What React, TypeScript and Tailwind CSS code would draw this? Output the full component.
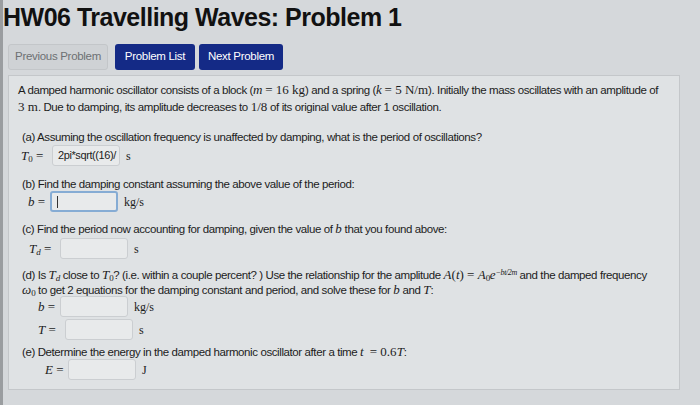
import React from "react";

const serif = "font-['Liberation_Serif',serif]";

const M = ({ children }: { children: React.ReactNode }) => (
  <span className={`${serif} italic text-[13px] leading-none tracking-normal`}>{children}</span>
);

const R = ({ children }: { children: React.ReactNode }) => (
  <span className={`${serif} text-[13px] leading-none tracking-normal`}>{children}</span>
);

const Sub = ({ children, italic }: { children: React.ReactNode; italic?: boolean }) => (
  <sub className={`${serif} text-[9px] ${italic ? "italic" : ""}`}>{children}</sub>
);

function AnswerRow({
  label,
  unit,
  value,
  ml,
  lw,
  mt,
  active,
}: {
  label: React.ReactNode;
  unit: string;
  value?: string;
  ml: string;
  lw: string;
  mt: string;
  active?: boolean;
}) {
  return (
    <div className={`flex items-center h-[21px] ${ml} ${mt}`}>
      <span className={`${serif} text-[13px] ${lw} whitespace-nowrap tracking-normal`}>{label}</span>
      <div
        className={`h-[21px] w-[68px] rounded-[3px] bg-[#e8eaeb] flex items-center px-[5px] text-[11px] overflow-hidden whitespace-nowrap ${
          active ? "border-2 border-[#86acd4]" : "border border-[#cbced1]"
        }`}
      >
        {value}
        {active && <span className="w-px h-[12px] bg-[#333]" />}
      </div>
      <span className={`${serif} text-[12px] ml-[6px] tracking-normal`}>{unit}</span>
    </div>
  );
}

export default function App() {
  return (
    <div className="w-[700px] h-[405px] overflow-hidden bg-[#d5d8db] font-['Liberation_Sans',Arial,sans-serif] text-[#1c1c1c] border-l-[3px] border-[#9a9da0]">
      <h1 className="pt-[2px] text-[25px] font-bold text-[#111] tracking-[-0.5px] leading-[30px]">
        HW06 Travelling Waves: Problem 1
      </h1>

      <div className="flex gap-[4px] ml-[5px] mt-[12px] text-[11.5px] tracking-[-0.3px]">
        <button className="h-[26px] w-[100px] rounded-[3px] bg-[#cfd2d5] border border-[#c3c6c9] text-[#6d7073]">
          Previous Problem
        </button>
        <button className="h-[26px] w-[80px] ml-[3px] rounded-[3px] bg-[#142a86] text-white">
          Problem List
        </button>
        <button className="h-[26px] w-[84px] rounded-[3px] bg-[#142a86] text-white">
          Next Problem
        </button>
      </div>

      <div className="ml-[5px] mt-[5px] w-[672px] h-[315px] bg-[#dfe2e4] border border-[#c4c7ca] pl-[9px] pr-[4px] pt-[6px] text-[11.5px] tracking-[-0.4px]">
        <p className="leading-[17px] whitespace-nowrap">
          A damped harmonic oscillator consists of a block (<M>m</M> <R>= 16 kg</R>) and a spring (<M>k</M>{" "}
          <R>= 5 N/m</R>). Initially the mass oscillates with an amplitude of
          <br />
          <R>3 m</R>. Due to damping, its amplitude decreases to <R>1/8</R> of its original value after 1 oscillation.
        </p>

        <div className="mt-[14px] pl-[4px] leading-[15px]">
          <p>(a) Assuming the oscillation frequency is unaffected by damping, what is the period of oscillations?</p>
        </div>
        <AnswerRow
          ml="ml-[3px]"
          lw="w-[31px]"
          mt="mt-0"
          label={
            <>
              <i>T</i>
              <Sub>0</Sub> =
            </>
          }
          value="2pi*sqrt((16)/"
          unit="s"
        />

        <div className="mt-[11px] pl-[4px] leading-[15px]">
          <p>(b) Find the damping constant assuming the above value of the period:</p>
        </div>
        <AnswerRow ml="ml-[10px]" lw="w-[22px]" mt="-mt-[1px]" label={<><i>b</i> =</>} unit="kg/s" active />

        <div className="mt-[10px] pl-[4px] leading-[15px]">
          <p>
            (c) Find the period now accounting for damping, given the value of <M>b</M> that you found above:
          </p>
        </div>
        <AnswerRow
          ml="ml-[11px]"
          lw="w-[31px]"
          mt="mt-[1px]"
          label={
            <>
              <i>T</i>
              <Sub italic>d</Sub> =
            </>
          }
          unit="s"
        />

        <div className="mt-[9px] pl-[4px] leading-[15px]">
          <p className="whitespace-nowrap">
            (d) Is <M>T</M>
            <Sub italic>d</Sub> close to <M>T</M>
            <Sub>0</Sub>? (i.e. within a couple percent? ) Use the relationship for the amplitude <M>A</M>
            <R>(</R>
            <M>t</M>
            <R>) = </R>
            <M>A</M>
            <Sub>0</Sub>
            <M>e</M>
            <sup className={`${serif} italic text-[8px]`}>−bt/2m</sup> and the damped frequency
            <br />
            <M>ω</M>
            <Sub>0</Sub> to get 2 equations for the damping constant and period, and solve these for <M>b</M> and{" "}
            <M>T</M>:
          </p>
        </div>
        <AnswerRow ml="ml-[20px]" lw="w-[22px]" mt="-mt-[2px]" label={<><i>b</i> =</>} unit="kg/s" />
        <AnswerRow ml="ml-[20px]" lw="w-[27px]" mt="mt-[2px]" label={<><i>T</i> =</>} unit="s" />

        <div className="mt-[5px] pl-[4px] leading-[15px]">
          <p>
            (e) Determine the energy in the damped harmonic oscillator after a time <M>t</M> <R>&nbsp;= 0.6</R>
            <M>T</M>:
          </p>
        </div>
        <AnswerRow ml="ml-[27px]" lw="w-[23px]" mt="-mt-[1px]" label={<><i>E</i> =</>} unit="J" />
      </div>
    </div>
  );
}
